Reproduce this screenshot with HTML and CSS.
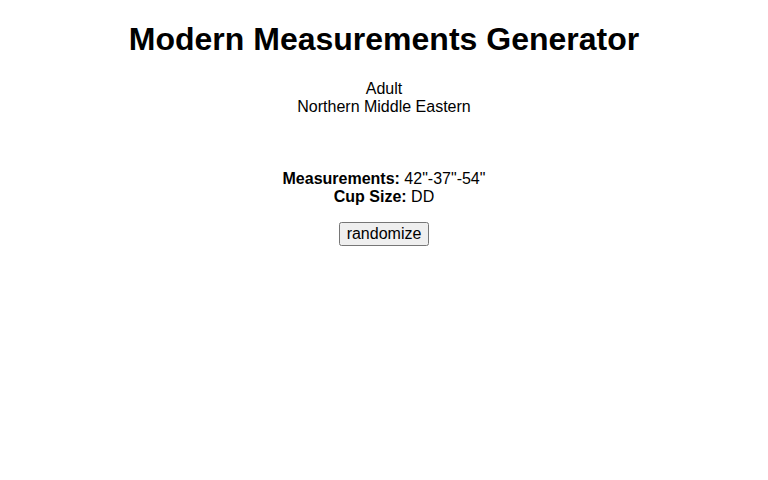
FILE: index.html
```html
<!DOCTYPE html>
<html lang="en">

<head>
    <meta charset="UTF-8">
    <meta name="viewport" content="width=device-width, initial-scale=1.0">
    <title>Modern Measurements Generator</title>
    <link rel="stylesheet" href="styles.css">
</head>

<body>

    <h1 class="title">Modern Measurements Generator</h1>

    <div class="person">
        <div id="age">Adult</div>
        <div id="ethnicity">Northern Middle Eastern</div>
    </div>

    <div class="stats">
        <div><b>Measurements:</b> <span id="measurements">42"-37"-54"</span></div>
        <div><b>Cup Size:</b> <span id="cup">DD</span></div>
    </div>

    <button class="randomize" onclick="randomize()">randomize</button>

    <script>
        const ages = ['Adult', 'Young Adult', 'Middle Aged', 'Senior'];
        const regions = ['Northern Middle Eastern', 'Western European', 'East Asian', 'South Asian', 'West African', 'Latin American'];
        const cups = ['A', 'B', 'C', 'D', 'DD', 'E', 'F'];

        function pick(list) {
            return list[Math.floor(Math.random() * list.length)];
        }

        function between(min, max) {
            return min + Math.floor(Math.random() * (max - min + 1));
        }

        function randomize() {
            document.getElementById('age').textContent = pick(ages);
            document.getElementById('ethnicity').textContent = pick(regions);
            let bust = between(30, 46);
            let waist = between(22, 40);
            let hips = between(32, 56);
            document.getElementById('measurements').textContent = bust + '"-' + waist + '"-' + hips + '"';
            document.getElementById('cup').textContent = pick(cups);
        }
    </script>

</body>

</html>
```

FILE: styles.css
```css
body {
    margin: 0 8px 8px;
    font-family: "Liberation Sans", Arial, sans-serif;
    font-size: 16px;
    text-align: center;
    color: #000;
    background-color: #fff;
}

.title {
    font-size: 32px;
    font-weight: bold;
    margin: 21px 0 22px;
}

.person {
    line-height: 18px;
}

.stats {
    line-height: 18px;
    margin-top: 54px;
    margin-bottom: 16px;
}

.randomize {
    font-family: "Liberation Sans", Arial, sans-serif;
    font-size: 16px;
    padding: 1px 6px;
}
```
